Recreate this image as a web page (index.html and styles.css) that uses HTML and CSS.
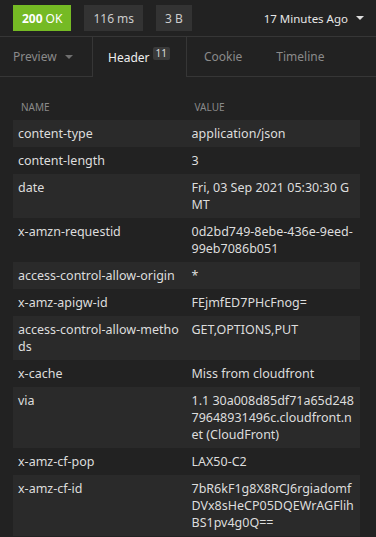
FILE: index.html
```html
<!DOCTYPE html>
<html lang="en">
<head>
    <meta charset="UTF-8">
    <meta name="viewport" content="width=device-width, initial-scale=1.0">
    <title>Response Headers</title>
    <link rel="stylesheet" href="styles.css">
</head>
<body>

<!-- Status Bar -->
<div class="status-bar">
    <span class="tag tag-ok"><b>200</b> OK</span>
    <span class="tag">116 ms</span>
    <span class="tag">3 B</span>
    <span class="time">17 Minutes Ago <i class="caret"></i></span>
</div>

<!-- Tabs -->
<div class="tabs">
    <div class="tab tab-preview">Preview <i class="caret caret-dim"></i></div>
    <div class="tab active">Header <span class="count">11</span></div>
    <div class="tab">Cookie</div>
    <div class="tab">Timeline</div>
</div>

<!-- Header Table -->
<div class="panel">
    <table class="headers">
        <thead>
            <tr><th>Name</th><th>Value</th></tr>
        </thead>
        <tbody>
            <tr><td>content-type</td><td>application/json</td></tr>
            <tr><td>content-length</td><td>3</td></tr>
            <tr><td>date</td><td>Fri, 03 Sep 2021 05:30:30 GMT</td></tr>
            <tr><td>x-amzn-requestid</td><td>0d2bd749-8ebe-436e-9eed-99eb7086b051</td></tr>
            <tr><td>access-control-allow-origin</td><td>*</td></tr>
            <tr><td>x-amz-apigw-id</td><td>FEjmfED7PHcFnog=</td></tr>
            <tr><td>access-control-allow-methods</td><td>GET,OPTIONS,PUT</td></tr>
            <tr><td>x-cache</td><td>Miss from cloudfront</td></tr>
            <tr><td>via</td><td>1.1 30a008d85df71a65d24879648931496c.cloudfront.net (CloudFront)</td></tr>
            <tr><td>x-amz-cf-pop</td><td>LAX50-C2</td></tr>
            <tr><td>x-amz-cf-id</td><td>7bR6kF1g8X8RCJ6rgiadomfDVx8sHeCP05DQEWrAGFlihBS1pv4g0Q==</td></tr>
        </tbody>
    </table>
</div>

</body>
</html>
```

FILE: styles.css
```css
body {
    margin: 0;
    background: #222222;
    color: #dddddd;
    font-family: 'Noto Sans', sans-serif;
    font-size: 12px;
}

/* Status Bar */
.status-bar {
    display: flex;
    align-items: center;
    height: 36px;
    padding: 0 12px 0 13px;
    gap: 13px;
}

.tag {
    display: inline-flex;
    align-items: center;
    height: 26px;
    padding: 0 9px;
    background: #333333;
    color: #cccccc;
}

.tag-ok {
    background: #75ba24;
    color: #ffffff;
}

.tag-ok b {
    margin-right: 3px;
}

.time {
    margin-left: auto;
    font-size: 11.5px;
    color: #e6e6e6;
    display: flex;
    align-items: center;
}

.caret {
    display: inline-block;
    width: 0;
    height: 0;
    margin-left: 8px;
    border-left: 4px solid transparent;
    border-right: 4px solid transparent;
    border-top: 4px solid #dddddd;
}

.caret-dim {
    border-top-color: #6f6f6f;
    margin-left: 8px;
}

/* Tabs */
.tabs {
    display: flex;
    height: 39px;
    border-top: 1px solid #363636;
    border-bottom: 1px solid #363636;
}

.tab {
    display: flex;
    align-items: center;
    padding: 0 17px;
    color: #8a8a8a;
}

.tab-preview {
    width: 79px;
    padding: 0 0 0 13px;
}

.tab.active {
    color: #eeeeee;
    padding: 0 16px 0 15px;
    border-left: 1px solid #363636;
    border-right: 1px solid #363636;
    margin-bottom: -1px;
    background: #222222;
}

.count {
    align-self: flex-start;
    margin: 10px 0 0 3px;
    padding: 0 3px;
    font-size: 10px;
    line-height: 13px;
    background: #3a3a3a;
    color: #dddddd;
    border-radius: 2px;
}

/* Header Table */
.panel {
    padding: 16px 16px 0 13px;
}

.headers {
    width: 347px;
    table-layout: fixed;
    border-collapse: collapse;
    font-size: 12.5px;
}

.headers th {
    height: 27px;
    padding: 0 8px;
    font-size: 10px;
    font-weight: normal;
    text-transform: uppercase;
    text-align: left;
    color: #8a8a8a;
}

.headers td {
    padding: 5px;
    line-height: 17px;
    vertical-align: top;
    word-break: break-all;
}

.headers tbody tr:nth-child(odd) {
    background: #2a2a2a;
}
```
